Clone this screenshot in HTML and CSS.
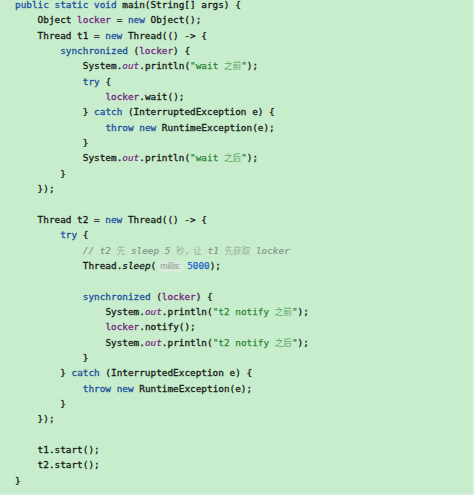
FILE: index.html
```html
<!DOCTYPE html>
<html>
<head>
<meta charset="utf-8">
<link rel="stylesheet" href="styles.css">
</head>
<body>
<div class="editor">
<div class="code">
<div class="ln"><span class="kw">public static void</span><span> main(String[] args) {</span></div>
<div class="ln i1"><span>Object </span><span class="var">locker</span><span> = </span><span class="kw">new</span><span> Object();</span></div>
<div class="ln i1"><span>Thread t1 = </span><span class="kw">new</span><span> Thread(() -&gt; {</span></div>
<div class="ln i2"><span class="kw">synchronized</span><span> (</span><span class="var">locker</span><span>) {</span></div>
<div class="ln i3"><span>System.</span><span class="st">out</span><span>.println(</span><span class="str">"wait </span><span class="cjk str">之前</span><span class="str">"</span><span>);</span></div>
<div class="ln i3"><span class="kw">try</span><span> {</span></div>
<div class="ln i4"><span class="var">locker</span><span>.wait();</span></div>
<div class="ln i3"><span>} </span><span class="kw">catch</span><span> (InterruptedException e) {</span></div>
<div class="ln i4"><span class="kw">throw new</span><span> RuntimeException(e);</span></div>
<div class="ln i3"><span>}</span></div>
<div class="ln i3"><span>System.</span><span class="st">out</span><span>.println(</span><span class="str">"wait </span><span class="cjk str">之后</span><span class="str">"</span><span>);</span></div>
<div class="ln i2"><span>}</span></div>
<div class="ln i1"><span>});</span></div>
<div class="ln"></div>
<div class="ln i1"><span>Thread t2 = </span><span class="kw">new</span><span> Thread(() -&gt; {</span></div>
<div class="ln i2"><span class="kw">try</span><span> {</span></div>
<div class="ln i3"><span class="cm">// t2 </span><span class="cjk cm">先</span><span class="cm"> sleep 5 </span><span class="cjk cm">秒，让</span><span class="cm"> t1 </span><span class="cjk cm">先获取</span><span class="cm"> locker</span></div>
<div class="ln i3"><span>Thread.</span><span class="it">sleep</span><span>(</span><span class="hint">millis:</span><span class="num">5000</span><span>);</span></div>
<div class="ln"></div>
<div class="ln i3"><span class="kw">synchronized</span><span> (</span><span class="var">locker</span><span>) {</span></div>
<div class="ln i4"><span>System.</span><span class="st">out</span><span>.println(</span><span class="str">"t2 notify </span><span class="cjk str">之前</span><span class="str">"</span><span>);</span></div>
<div class="ln i4"><span class="var">locker</span><span>.notify();</span></div>
<div class="ln i4"><span>System.</span><span class="st">out</span><span>.println(</span><span class="str">"t2 notify </span><span class="cjk str">之后</span><span class="str">"</span><span>);</span></div>
<div class="ln i3"><span>}</span></div>
<div class="ln i2"><span>} </span><span class="kw">catch</span><span> (InterruptedException e) {</span></div>
<div class="ln i3"><span class="kw">throw new</span><span> RuntimeException(e);</span></div>
<div class="ln i2"><span>}</span></div>
<div class="ln i1"><span>});</span></div>
<div class="ln"></div>
<div class="ln i1"><span>t1.start();</span></div>
<div class="ln i1"><span>t2.start();</span></div>
<div class="ln"><span>}</span></div>
</div>
</div>
</body>
</html>
```
FILE: styles.css
```css
html, body {
  margin: 0;
  padding: 0;
  background: #c7edcc;
}
.editor {
  height: 495px;
  box-sizing: border-box;
  overflow: hidden;
  border-right: 2px solid #d3f1d7;
  border-bottom: 2px solid #d3f1d7;
}
.code {
  margin-top: -3px;
  padding-left: 15px;
  font-family: "DejaVu Sans Mono", monospace;
  font-size: 9.4px;
  line-height: 15.35px;
  color: #161b17;
  -webkit-text-stroke: 0.3px #161b17;
}
.ln {
  height: 15.35px;
  white-space: pre;
}
.i1 { padding-left: 22.6px; }
.i2 { padding-left: 45.2px; }
.i3 { padding-left: 67.8px; }
.i4 { padding-left: 90.4px; }
.kw { color: #22509f; -webkit-text-stroke: 0.3px #22509f; }
.var { color: #76287f; -webkit-text-stroke: 0.3px #76287f; }
.st { color: #76287f; font-style: italic; -webkit-text-stroke: 0.2px #76287f; }
.it { font-style: italic; }
.str { color: #2a8636; -webkit-text-stroke: 0.25px #2a8636; }
.num { color: #2560d0; -webkit-text-stroke: 0.25px #2560d0; }
.cm { color: #859187; font-style: italic; -webkit-text-stroke: 0.15px #859187; }
.cjk {
  font-family: "Noto Sans CJK SC", sans-serif;
  font-size: 8.6px;
  font-style: normal;
  opacity: 0.7;
  -webkit-text-stroke: 0;
}
.hint {
  display: inline-block;
  font-family: "Liberation Sans", sans-serif;
  font-size: 8.4px;
  line-height: 11px;
  color: #8d938e;
  background: #d9ecdb;
  border-radius: 3px;
  padding: 0 2px;
  margin: 0 4px 0 2px;
  -webkit-text-stroke: 0;
}
```
